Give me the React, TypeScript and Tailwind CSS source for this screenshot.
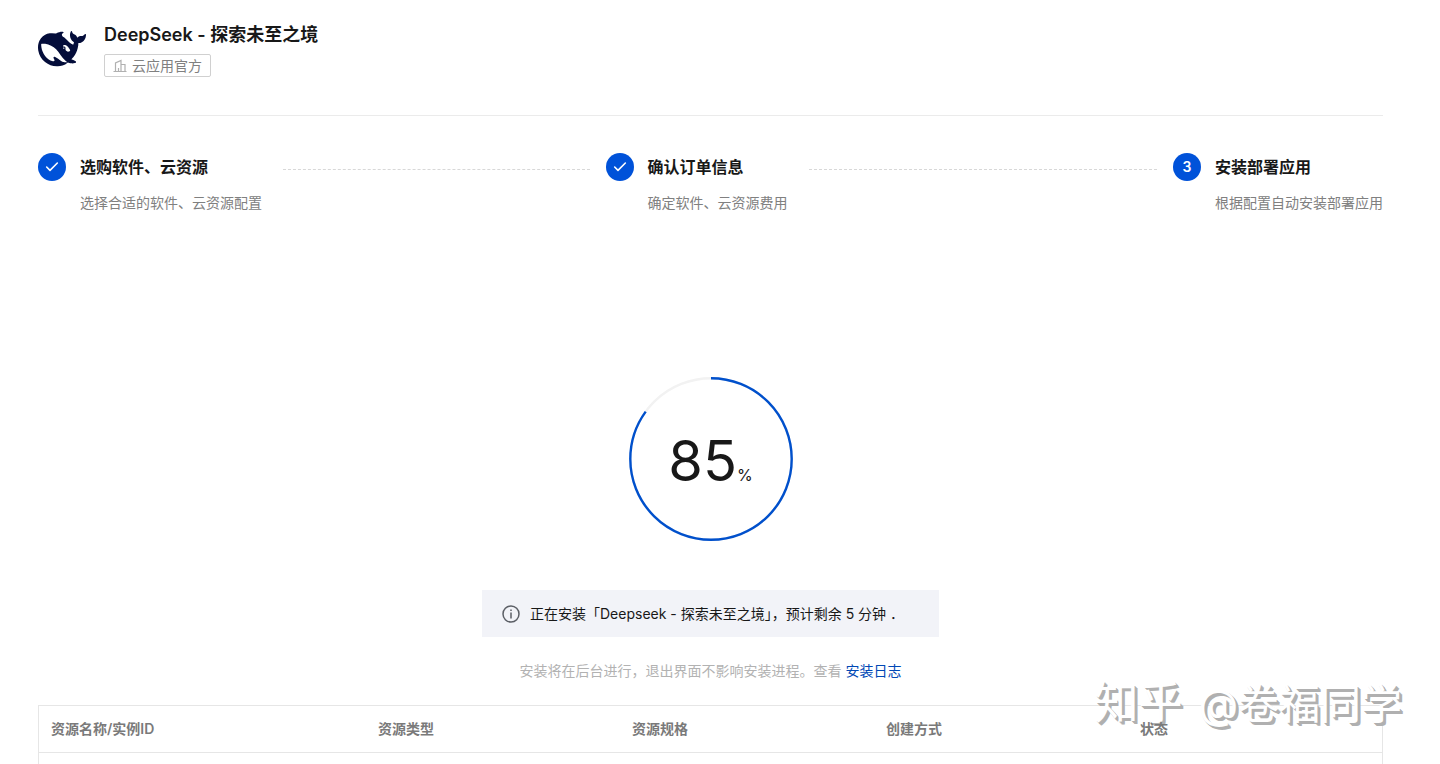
import { Check } from "lucide-react";

const STEPS = [
  { title: "选购软件、云资源", desc: "选择合适的软件、云资源配置", done: true },
  { title: "确认订单信息", desc: "确定软件、云资源费用", done: true },
  { title: "安装部署应用", desc: "根据配置自动安装部署应用", done: false },
];

const COLUMNS = ["资源名称/实例ID", "资源类型", "资源规格", "创建方式", "状态"];

const PROGRESS = 85;

function WhaleLogo() {
  return (
    <svg viewBox="0 0 24 24" className="size-12 shrink-0 fill-[#040d3a]" aria-hidden="true">
      <path d="M23.748 4.482c-.254-.124-.364.113-.512.234-.051.039-.094.09-.137.136-.372.397-.806.657-1.373.626-.829-.046-1.537.214-2.163.848-.133-.782-.575-1.248-1.247-1.548-.352-.156-.708-.311-.955-.65-.172-.241-.219-.51-.305-.774-.055-.16-.11-.323-.293-.35-.2-.031-.278.136-.356.276-.313.572-.434 1.202-.422 1.84.027 1.436.633 2.58 1.838 3.393.137.093.172.187.129.323-.082.28-.18.552-.266.833-.055.179-.137.217-.329.14a5.526 5.526 0 01-1.736-1.18c-.857-.828-1.631-1.742-2.597-2.458a11.365 11.365 0 00-.689-.471c-.985-.957.13-1.743.388-1.836.27-.098.093-.432-.779-.428-.872.004-1.67.295-2.687.684a3.055 3.055 0 01-.465.137 9.597 9.597 0 00-2.883-.102c-1.885.21-3.39 1.102-4.497 2.623C.082 8.606-.231 10.684.152 12.85c.403 2.284 1.569 4.175 3.36 5.653 1.858 1.533 3.997 2.284 6.438 2.14 1.482-.085 3.133-.284 4.994-1.86.47.234.962.327 1.78.397.63.059 1.236-.03 1.705-.128.735-.156.684-.837.419-.961-2.155-1.004-1.682-.595-2.113-.926 1.096-1.296 2.746-2.642 3.392-7.003.05-.347.007-.565 0-.845-.004-.17.035-.237.23-.256a4.173 4.173 0 001.545-.475c1.396-.763 1.96-2.015 2.093-3.517.02-.23-.004-.467-.247-.588zM11.581 18c-2.089-1.642-3.102-2.183-3.52-2.16-.392.024-.321.471-.235.763.09.288.207.486.371.739.114.167.192.416-.113.603-.673.416-1.842-.14-1.897-.167-1.361-.802-2.5-1.86-3.301-3.307-.774-1.393-1.224-2.887-1.298-4.482-.02-.386.093-.522.477-.592a4.696 4.696 0 011.529-.039c2.132.312 3.946 1.265 5.468 2.774.868.86 1.525 1.887 2.202 2.891.72 1.066 1.494 2.082 2.48 2.914.348.292.625.514.891.677-.802.09-2.14.11-3.054-.614zm1-6.44a.306.306 0 01.415-.287.302.302 0 01.2.288.306.306 0 01-.31.307.303.303 0 01-.304-.308zm3.11 1.596c-.2.081-.399.151-.59.16a1.245 1.245 0 01-.798-.254c-.274-.23-.47-.358-.552-.758a1.73 1.73 0 01.016-.588c.07-.327-.008-.537-.239-.727-.187-.156-.426-.199-.688-.199a.559.559 0 01-.254-.078c-.11-.114-.078-.292-.004-.437.027-.052.16-.183.191-.207.355-.202.766-.136 1.146.016.352.144.618.408 1.001.782.391.451.462.576.685.914.176.265.336.537.445.848.067.195-.019.354-.25.452z" />
    </svg>
  );
}

function BuildingIcon() {
  return (
    <svg viewBox="0 0 14 14" className="size-3.5" fill="none" stroke="#b0b0b0" strokeWidth="1.2" aria-hidden="true">
      <path d="M.5 12.500h13M2.500 12.500V4L8 1.500v11M8 5.500h4v7M5.500 12.500V9" />
    </svg>
  );
}

function InfoIcon() {
  return (
    <svg viewBox="0 0 18 18" className="size-[18px] shrink-0" fill="none" stroke="#5c5f66" aria-hidden="true">
      <circle cx="9" cy="9" r="8" strokeWidth="1.5" />
      <path d="M9 4.500v1.600M9 7.500v6" strokeWidth="1.5" />
    </svg>
  );
}

function ProgressRing() {
  return (
    <div
      role="progressbar"
      aria-valuenow={PROGRESS}
      className="relative grid size-41 place-items-center"
    >
      <svg
        viewBox="0 0 164 164"
        className="absolute inset-0 size-full -rotate-90"
        fill="none"
        strokeWidth="2.4"
      >
        <circle cx="82" cy="82" r="80.7" stroke="#f2f2f2" />
        <circle
          cx="82"
          cy="82"
          r="80.7"
          stroke="#0050cc"
          pathLength="100"
          strokeDasharray={`${PROGRESS} 100`}
        />
      </svg>
      <div className="flex items-baseline pt-1 text-[#181818]">
        <span className="text-[56px] leading-none">{PROGRESS}</span>
        <span className="text-base">%</span>
      </div>
    </div>
  );
}

export default function App() {
  return (
    <div className="relative flex min-h-screen flex-col overflow-hidden bg-white pr-[57px] pl-[38px] font-[Inter,'Noto_Sans_CJK_SC',sans-serif] text-sm text-[#181818]">
      <header className="flex items-center gap-[18px] border-b border-[#ebebeb] pt-5 pb-[38px]">
        <WhaleLogo />
        <div>
          <h1 className="text-lg leading-[30px] font-semibold">
            DeepSeek - 探索未至之境
          </h1>
          <span className="mt-1 flex h-[23px] w-fit items-center gap-[5px] rounded-xs border border-[#d0d0d0] px-2 text-[#808080]">
            <BuildingIcon />
            云应用官方
          </span>
        </div>
      </header>

      <ol className="mt-[35px] flex">
        {STEPS.map((step, i) => (
          <li
            key={step.title}
            className="flex items-start not-last:flex-1"
          >
            <span className="mt-0.5 mr-3.5 grid size-7 shrink-0 place-items-center rounded-full bg-[#0052d9] font-semibold text-white">
              {step.done ? <Check className="size-4" strokeWidth={2.4} /> : i + 1}
            </span>
            <div>
              <h2 className="text-base leading-8 font-semibold">{step.title}</h2>
              <p className="mt-2 leading-6 text-[#808080]">{step.desc}</p>
            </div>
            {i < STEPS.length - 1 && (
              <span className="mt-[18px] mr-4 ml-[21px] flex-1 border-t border-dashed border-[#d8d8d8]" />
            )}
          </li>
        ))}
      </ol>

      <main className="flex flex-col items-center pt-[162px]">
        <ProgressRing />
        <div className="mt-[49px] flex h-[47px] w-full max-w-[457px] items-center gap-2.5 bg-[#f2f3f8] px-5">
          <InfoIcon />
          <p>正在安装「Deepseek - 探索未至之境」，预计剩余 5 分钟 ．</p>
        </div>
        <p className="mt-6 leading-5 text-[#b2b2b2]">
          安装将在后台进行，退出界面不影响安装进程。查看{" "}
          <a href="#log" className="text-[#0048b5]">
            安装日志
          </a>
        </p>
      </main>

      <div className="mt-6 flex-1 border-x border-t border-[#e6e6e6]">
        <table className="w-full table-fixed text-left">
          <thead>
            <tr className="h-[46px] border-b border-[#e6e6e6] text-[#7a7a7a]">
              {COLUMNS.map((col) => (
                <th key={col} className="px-3 font-semibold first:w-[327px]">
                  <span className="relative z-10">{col}</span>
                </th>
              ))}
            </tr>
          </thead>
        </table>
      </div>

      <div className="pointer-events-none absolute right-[38px] bottom-[30px] flex items-baseline gap-4 text-[41px] leading-[60px] text-white [text-shadow:1px_1px_0_#b0b0b0,2px_2px_0_#b0b0b0,3px_3px_0_#b0b0b0]">
        <span className="text-[44px]">知乎</span>
        <span>@卷福同学</span>
      </div>
    </div>
  );
}
